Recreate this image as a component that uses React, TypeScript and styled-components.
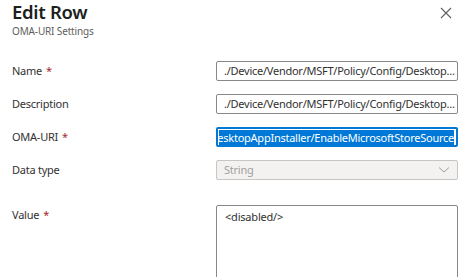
import React from 'react';
import styled, { createGlobalStyle } from 'styled-components';

const GlobalStyle = createGlobalStyle`
    html, body {
        margin: 0;
        padding: 0;
        background: #ffffff;
    }
    body {
        font-family: "Noto Sans", "Open Sans", sans-serif;
        color: #323130;
    }
`;

const Panel = styled.div`
    width: 474px;
    height: 277px;
    overflow: hidden;
    box-sizing: border-box;
    padding: 0 16px 0 12px;
`;

const Header = styled.div`
    display: flex;
    justify-content: space-between;
    align-items: flex-start;
`;

const TitleBlock = styled.div`
    display: flex;
    flex-direction: column;
`;

const Title = styled.h1`
    margin: 0;
    font-size: 18.5px;
    line-height: 24px;
    font-weight: 600;
    color: #201f1e;
    letter-spacing: -0.3px;
`;

const Subtitle = styled.div`
    font-size: 10px;
    line-height: 14px;
    color: #605e5c;
    letter-spacing: -0.15px;
`;

const CloseButton = styled.button`
    border: none;
    background: none;
    padding: 0;
    margin: 7px 6px 0 0;
    width: 12px;
    height: 12px;
    display: flex;
    cursor: pointer;
`;

const Form = styled.div`
    display: grid;
    grid-template-columns: 204px 242px;
    row-gap: 13px;
    margin-top: 23px;
`;

const Label = styled.div<{ $tall?: boolean }>`
    font-size: 11px;
    line-height: 20px;
    letter-spacing: -0.25px;
    color: #323130;
    margin-top: ${({ $tall }) => ($tall ? '12px' : '0')};
`;

const Required = styled.span`
    color: #a4262c;
    margin-left: 4px;
`;

const Field = styled.div<{ $focused?: boolean; $disabled?: boolean }>`
    height: 20px;
    box-sizing: border-box;
    border: ${({ $focused }) => ($focused ? '2px' : '1px')} solid;
    border-color: ${({ $focused, $disabled }) => ($focused ? '#0078d4' : $disabled ? '#c8c6c4' : '#8a8886')};
    border-radius: 2px;
    background: ${({ $disabled }) => ($disabled ? '#f3f2f1' : '#ffffff')};
    color: ${({ $disabled }) => ($disabled ? '#a19f9d' : '#323130')};
    font-size: 11px;
    letter-spacing: -0.25px;
    line-height: 18px;
    padding: ${({ $focused }) => ($focused ? '0 2px 0 1px' : '0 7px')};
    white-space: nowrap;
    overflow: hidden;
    display: flex;
    align-items: center;
    justify-content: space-between;
`;

const Selected = styled.span`
    background: #0078d7;
    color: #ffffff;
    line-height: 15px;
    display: flex;
    justify-content: flex-end;
    overflow: hidden;
    width: 100%;
`;

const TextArea = styled.div`
    margin-top: 12px;
    height: 90px;
    box-sizing: border-box;
    border: 1px solid #8a8886;
    border-radius: 2px;
    font-size: 11px;
    letter-spacing: -0.2px;
    line-height: 18px;
    padding: 2px 8px;
    color: #323130;
`;

const Chevron = () => (
    <svg width="12" height="8" viewBox="0 0 12 8">
        <path d="M1 1.5 L6 6 L11 1.5" fill="none" stroke="#a19f9d" strokeWidth="1" />
    </svg>
);

const App: React.FC = () => {
    return (
        <Panel>
            <GlobalStyle />
            <Header>
                <TitleBlock>
                    <Title>Edit Row</Title>
                    <Subtitle>OMA-URI Settings</Subtitle>
                </TitleBlock>
                <CloseButton aria-label="Close">
                    <svg width="12" height="12" viewBox="0 0 12 12">
                        <path d="M1 1 L11 11 M11 1 L1 11" stroke="#605e5c" strokeWidth="1.1" />
                    </svg>
                </CloseButton>
            </Header>
            <Form>
                <Label>
                    Name<Required>*</Required>
                </Label>
                <Field>./Device/Vendor/MSFT/Policy/Config/Desktop...</Field>

                <Label>Description</Label>
                <Field>./Device/Vendor/MSFT/Policy/Config/Desktop...</Field>

                <Label>
                    OMA-URI<Required>*</Required>
                </Label>
                <Field $focused>
                    <Selected>
                        <span>./Device/Vendor/MSFT/Policy/Config/DesktopAppInstaller/EnableMicrosoftStoreSource</span>
                    </Selected>
                </Field>

                <Label>Data type</Label>
                <Field $disabled>
                    String
                    <Chevron />
                </Field>

                <Label $tall>
                    Value<Required>*</Required>
                </Label>
                <TextArea>&lt;disabled/&gt;</TextArea>
            </Form>
        </Panel>
    );
};

export default App;
